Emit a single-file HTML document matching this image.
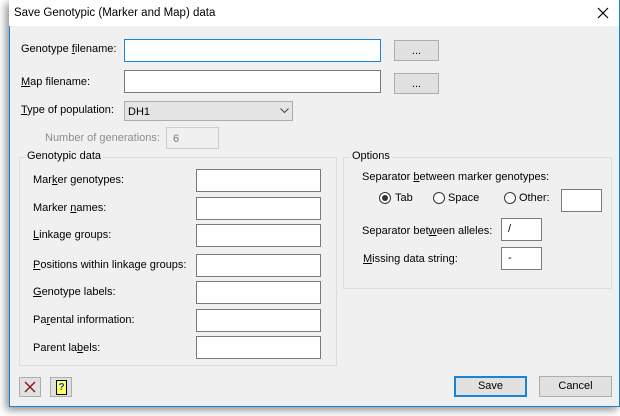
<!DOCTYPE html>
<html><head><style>
body{margin:0;width:620px;height:416px;background:#fff;position:relative;overflow:hidden;font-family:"Liberation Sans",sans-serif;font-size:11px;color:#000}
.a{position:absolute}
.win{left:9px;top:0;width:609px;height:406px;background:#f0f0f0;border:1px solid #1883d7;border-top:none;box-shadow:-3px 3px 8px rgba(0,0,0,.45)}
.title{left:9px;top:0;width:610px;height:26px;background:#fff}
.box{background:#fff;border:1px solid #7a7a7a;box-sizing:border-box}
.btn{background:#e1e1e1;border:1px solid #adadad;box-sizing:border-box;text-align:center}
.grp{border:1px solid #dcdcdc;box-sizing:border-box}
.lg{background:#f0f0f0;padding:0 2px}
.rad{width:12px;height:12px;border:1px solid #333;border-radius:50%;box-sizing:border-box;background:#fff}
u{text-decoration:underline}
</style></head><body>
<div class="a win"></div>
<div class="a title"></div>
<div class="a" style="left:14px;top:7px;font-size:11.5px">Save Genotypic (Marker and Map) data</div>
<svg class="a" style="left:597px;top:7px" width="12" height="12"><path d="M1 1L11 11M11 1L1 11" stroke="#000" stroke-width="1.2"/></svg>

<div class="a" style="left:21px;top:43px">Genotype <u>f</u>ilename:</div>
<div class="a box" style="left:124px;top:39px;width:257px;height:23px;border-color:#1883d7"></div>
<div class="a btn" style="left:394px;top:40px;width:45px;height:21px;line-height:21px">...</div>
<div class="a" style="left:21px;top:76px"><u>M</u>ap filename:</div>
<div class="a box" style="left:124px;top:70px;width:257px;height:23px"></div>
<div class="a btn" style="left:394px;top:73px;width:45px;height:21px;line-height:21px">...</div>
<div class="a" style="left:21px;top:104px"><u>T</u>ype of population:</div>
<div class="a" style="left:124px;top:101px;width:169px;height:20px;background:#e5e5e5;border:1px solid #adadad;box-sizing:border-box"></div>
<div class="a" style="left:128px;top:106px">DH1</div>
<svg class="a" style="left:280px;top:108px" width="9" height="6"><path d="M0.5 0.5L4.5 4.5L8.5 0.5" stroke="#444" fill="none"/></svg>
<div class="a" style="left:45px;top:132px;color:#8d8d8d">Number of generations:</div>
<div class="a" style="left:166px;top:127px;width:53px;height:22px;border:1px solid #ccc;box-sizing:border-box;color:#7a7a7a;padding:5px 0 0 6px">6</div>

<div class="a grp" style="left:19px;top:157px;width:318px;height:209px"></div>
<div class="a lg" style="left:25px;top:150px">Genotypic data</div>
<div class="a" style="left:33px;top:174px">Mar<u>k</u>er genotypes:</div>
<div class="a" style="left:33px;top:202px">Marker <u>n</u>ames:</div>
<div class="a" style="left:33px;top:229px"><u>L</u>inkage groups:</div>
<div class="a" style="left:33px;top:259px"><u>P</u>ositions within linkage groups:</div>
<div class="a" style="left:33px;top:286px"><u>G</u>enotype labels:</div>
<div class="a" style="left:33px;top:314px">Pa<u>r</u>ental information:</div>
<div class="a" style="left:33px;top:342px">Parent la<u>b</u>els:</div>
<div class="a box" style="left:196px;top:169px;width:125px;height:23px"></div>
<div class="a box" style="left:196px;top:197px;width:125px;height:23px"></div>
<div class="a box" style="left:196px;top:224px;width:125px;height:23px"></div>
<div class="a box" style="left:196px;top:254px;width:125px;height:23px"></div>
<div class="a box" style="left:196px;top:281px;width:125px;height:23px"></div>
<div class="a box" style="left:196px;top:309px;width:125px;height:23px"></div>
<div class="a box" style="left:196px;top:336px;width:125px;height:23px"></div>

<div class="a grp" style="left:343px;top:157px;width:269px;height:132px"></div>
<div class="a lg" style="left:350px;top:150px">Options</div>
<div class="a" style="left:362px;top:171px">Separator <u>b</u>etween marker genotypes:</div>
<div class="a rad" style="left:379px;top:192px"><div style="width:6px;height:6px;border-radius:50%;background:#333;margin:2px"></div></div>
<div class="a" style="left:395px;top:192px">Tab</div>
<div class="a rad" style="left:433px;top:192px"></div>
<div class="a" style="left:448px;top:192px">Space</div>
<div class="a rad" style="left:504px;top:192px"></div>
<div class="a" style="left:519px;top:192px">Other:</div>
<div class="a box" style="left:561px;top:189px;width:41px;height:23px"></div>
<div class="a" style="left:362px;top:225px">Separator bet<u>w</u>een alleles:</div>
<div class="a box" style="left:501px;top:218px;width:41px;height:23px;padding:4px 0 0 6px">/</div>
<div class="a" style="left:363px;top:253px"><u>M</u>issing data string:</div>
<div class="a box" style="left:501px;top:247px;width:41px;height:23px;padding:4px 0 0 6px">-</div>

<div class="a btn" style="left:19px;top:377px;width:22px;height:20px"><svg width="20" height="18"><path d="M5 4L15 14M15 4L5 14" stroke="#8b1a1a" stroke-width="1.5"/></svg></div>
<div class="a btn" style="left:50px;top:377px;width:22px;height:20px"><div style="margin:2px 0 0 5px;width:9px;height:13px;border:1px solid #000;background:#ffff60;font-size:10px;line-height:13px;color:#2040c0;font-weight:bold">?</div></div>
<div class="a btn" style="left:454px;top:376px;width:73px;height:21px;line-height:17px;border:2px solid #1883d7">Save</div>
<div class="a btn" style="left:539px;top:376px;width:73px;height:21px;line-height:19px">Cancel</div>
</body></html>
